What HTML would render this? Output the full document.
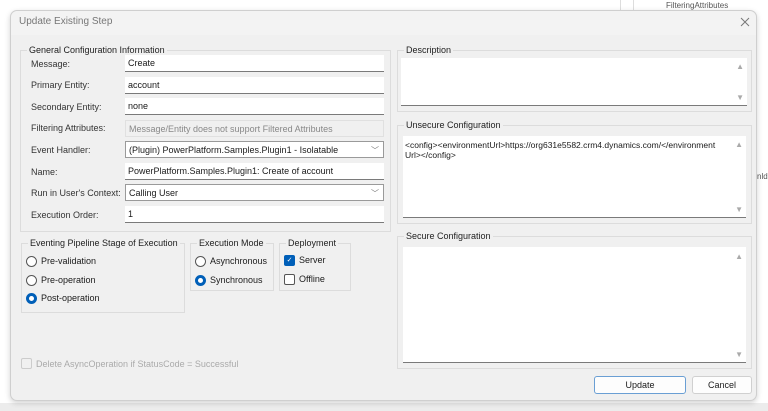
<!DOCTYPE html>
<html><head><meta charset="utf-8"><style>
*{box-sizing:border-box;margin:0;padding:0}
body{width:768px;height:411px;overflow:hidden;background:#fff;font-family:"Liberation Sans",sans-serif;font-size:9px;color:#1a1a1a;position:relative}
.a{position:absolute}
.dlg{left:10px;top:10px;width:747px;height:391px;background:#f0f0f0;border:1px solid #cfcfcf;border-radius:7px;box-shadow:0 2px 6px rgba(0,0,0,.18)}
.grp{position:absolute;border:1px solid #dcdcdc}
.lg{position:absolute;top:-6px;left:6px;background:#f0f0f0;padding:0 2px;font-size:9px;color:#222}
.in{position:absolute;left:125px;width:259px;height:17px;background:#fff;border-bottom:1px solid #7a7a7a;padding:3px 3px;font-size:9px;white-space:nowrap}
.lb{position:absolute;left:31px;font-size:9px;color:#333}
.chev{position:absolute;right:4px;top:3px;color:#777;font-size:8px}
.rad{position:absolute;width:11px;height:11px;border-radius:50%;border:1px solid #555;background:#fff}
.rad.on{border:3px solid #005fb8}
.ta{position:absolute;background:#fff;border-bottom:1px solid #7a7a7a}
.sb{position:absolute;right:3px;color:#aaa;font-size:8px}
.btn{position:absolute;height:18px;background:#fdfdfd;border:1px solid #d0d0d0;border-radius:3px;text-align:center;line-height:16px;font-size:9px}
</style></head><body>
<div class="a" style="left:620px;top:0;width:1px;height:12px;background:#ddd"></div>
<div class="a" style="left:633px;top:0;width:1px;height:12px;background:#ddd"></div>
<div class="a" style="left:666px;top:1px;font-size:8px;color:#555">FilteringAttributes</div>
<div class="a" style="left:757px;top:172px;font-size:8px;color:#555">nld</div>
<div class="a" style="left:0;top:403px;width:768px;height:8px;background:#ececec"></div>
<div class="a dlg"></div>
<div class="a" style="left:11px;top:11px;width:745px;height:24px;background:#f3f3f3;border-radius:7px 7px 0 0"></div>
<div class="a" style="left:19px;top:16px;font-size:10px;color:#777">Update Existing Step</div>
<svg class="a" style="left:740px;top:17px" width="10" height="10" viewBox="0 0 10 10"><path d="M1 1L9 9M9 1L1 9" stroke="#777" stroke-width="1" fill="none"/></svg>

<div class="grp" style="left:20px;top:50px;width:371px;height:182px"><div class="lg">General Configuration Information</div></div>
<div class="lb" style="top:59px">Message:</div><div class="in" style="top:55px">Create</div>
<div class="lb" style="top:80px">Primary Entity:</div><div class="in" style="top:77px">account</div>
<div class="lb" style="top:102px">Secondary Entity:</div><div class="in" style="top:98px">none</div>
<div class="lb" style="top:123px">Filtering Attributes:</div><div class="in" style="top:120px;background:#f0f0f0;border:1px solid #e0e0e0;color:#888">Message/Entity does not support Filtered Attributes</div>
<div class="lb" style="top:145px">Event Handler:</div><div class="in" style="top:141px;border:1px solid #9a9a9a">(Plugin) PowerPlatform.Samples.Plugin1 - Isolatable<span class="chev">﹀</span></div>
<div class="lb" style="top:167px">Name:</div><div class="in" style="top:163px">PowerPlatform.Samples.Plugin1: Create of account</div>
<div class="lb" style="top:188px">Run in User's Context:</div><div class="in" style="top:184px;border:1px solid #9a9a9a">Calling User<span class="chev">﹀</span></div>
<div class="lb" style="top:210px">Execution Order:</div><div class="in" style="top:206px">1</div>

<div class="grp" style="left:21px;top:243px;width:164px;height:70px"><div class="lg">Eventing Pipeline Stage of Execution</div></div>
<div class="rad" style="left:26px;top:256px"></div><div class="a" style="left:41px;top:256px">Pre-validation</div>
<div class="rad" style="left:26px;top:275px"></div><div class="a" style="left:41px;top:275px">Pre-operation</div>
<div class="rad on" style="left:26px;top:293px"></div><div class="a" style="left:41px;top:293px">Post-operation</div>

<div class="grp" style="left:190px;top:243px;width:84px;height:48px"><div class="lg">Execution Mode</div></div>
<div class="rad" style="left:195px;top:256px"></div><div class="a" style="left:210px;top:256px">Asynchronous</div>
<div class="rad on" style="left:195px;top:275px"></div><div class="a" style="left:210px;top:275px">Synchronous</div>

<div class="grp" style="left:279px;top:243px;width:72px;height:48px"><div class="lg">Deployment</div></div>
<div class="a" style="left:284px;top:255px;width:11px;height:11px;background:#005fb8;border-radius:2px;color:#fff;font-size:7px;text-align:center;line-height:11px">✓</div><div class="a" style="left:299px;top:255px">Server</div>
<div class="a" style="left:284px;top:274px;width:11px;height:11px;border:1px solid #555;border-radius:2px;background:#fff"></div><div class="a" style="left:299px;top:274px">Offline</div>

<div class="a" style="left:21px;top:358px;width:11px;height:11px;border:1px solid #ccc;border-radius:2px"></div>
<div class="a" style="left:36px;top:359px;color:#aaa">Delete AsyncOperation if StatusCode = Successful</div>

<div class="grp" style="left:397px;top:50px;width:355px;height:62px"><div class="lg">Description</div></div>
<div class="ta" style="left:401px;top:58px;width:346px;height:48px"><span class="sb" style="top:4px">▲</span><span class="sb" style="top:35px">▼</span></div>
<div class="grp" style="left:397px;top:125px;width:355px;height:99px"><div class="lg">Unsecure Configuration</div></div>
<div class="ta" style="left:403px;top:136px;width:343px;height:82px;padding:4px 3px 0 2px;font-size:8.5px;line-height:10px"><div style="white-space:nowrap">&lt;config&gt;&lt;environmentUrl&gt;https://org631e5582.crm4.dynamics.com/&lt;/environment<br>Url&gt;&lt;/config&gt;</div><span class="sb" style="top:4px">▲</span><span class="sb" style="top:69px">▼</span></div>
<div class="grp" style="left:397px;top:236px;width:355px;height:133px"><div class="lg">Secure Configuration</div></div>
<div class="ta" style="left:403px;top:247px;width:343px;height:116px"><span class="sb" style="top:5px">▲</span><span class="sb" style="top:103px">▼</span></div>

<div class="btn" style="left:594px;top:376px;width:92px;border:1px solid #6a9fd4">Update</div>
<div class="btn" style="left:692px;top:376px;width:60px">Cancel</div>
</body></html>
